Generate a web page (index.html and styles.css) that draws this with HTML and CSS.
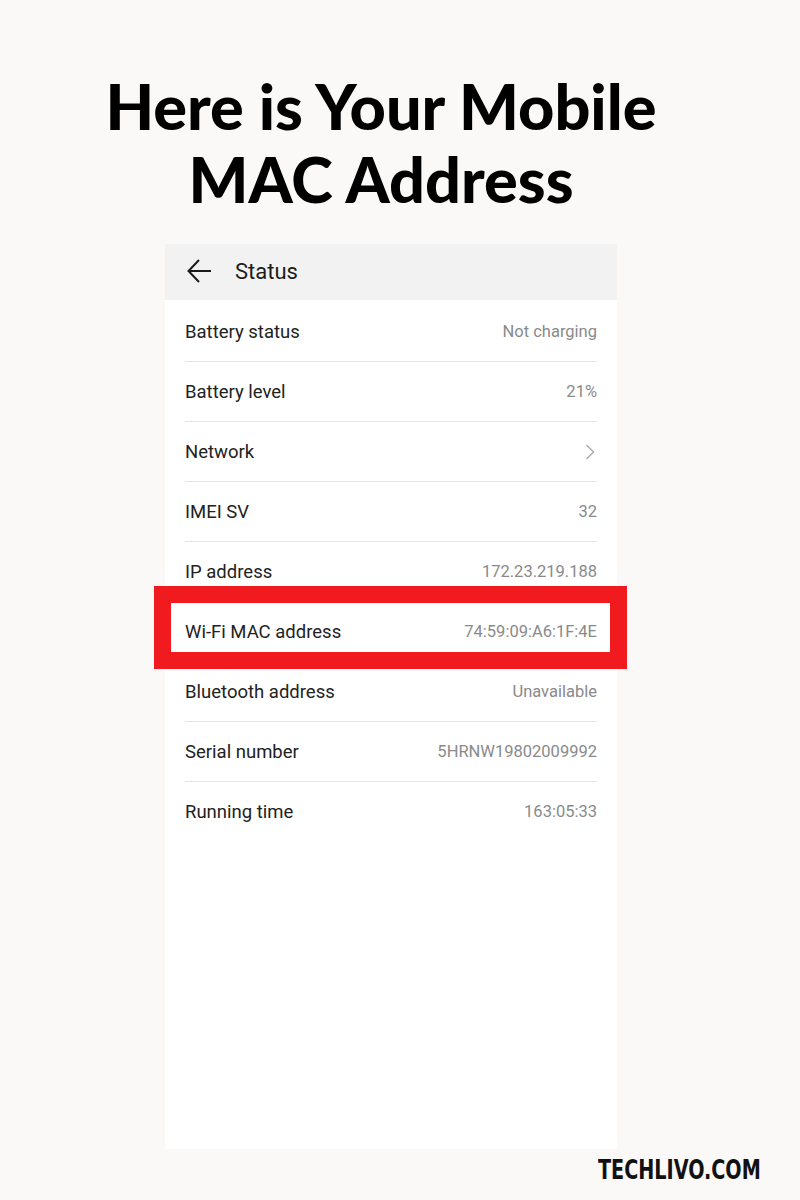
FILE: index.html
```html
<!DOCTYPE html>
<html>
<head>
<meta charset="utf-8">
<link rel="stylesheet" href="styles.css">
</head>
<body>
<div class="page">
  <h1 class="title">Here is Your Mobile<br>MAC Address</h1>
  <div class="phone">
    <div class="appbar">
      <svg class="back" width="24" height="24" viewBox="0 0 24 24"><path d="M12 1 L1.5 12 L12 23 M1.5 12 H24" fill="none" stroke="#1a1a1a" stroke-width="2"/></svg>
      <span class="appbar-title">Status</span>
    </div>
    <ul class="list">
      <li class="row"><span class="label">Battery status</span><span class="value">Not charging</span></li>
      <li class="row"><span class="label">Battery level</span><span class="value">21%</span></li>
      <li class="row"><span class="label">Network</span><svg class="chev" width="10" height="16" viewBox="0 0 10 16"><path d="M1.5 1 L8.5 8 L1.5 15" fill="none" stroke="#a8a8a8" stroke-width="1.4"/></svg></li>
      <li class="row"><span class="label">IMEI SV</span><span class="value">32</span></li>
      <li class="row"><span class="label">IP address</span><span class="value">172.23.219.188</span></li>
      <li class="row"><span class="label">Wi-Fi MAC address</span><span class="value">74:59:09:A6:1F:4E</span></li>
      <li class="row"><span class="label">Bluetooth address</span><span class="value">Unavailable</span></li>
      <li class="row"><span class="label">Serial number</span><span class="value">5HRNW19802009992</span></li>
      <li class="row last"><span class="label">Running time</span><span class="value">163:05:33</span></li>
    </ul>
    <div class="highlight"></div>
  </div>
  <div class="brand">TECHLIVO.COM</div>
</div>
</body>
</html>
```

FILE: styles.css
```css
html, body {
  margin: 0;
  padding: 0;
  background: #faf9f7;
}
.page {
  width: 800px;
  height: 1200px;
  position: relative;
  overflow: hidden;
}
.title {
  margin: 0;
  padding: 69px 38px 0 0;
  text-align: center;
  font-family: "Lato", "Liberation Sans", sans-serif;
  font-weight: 900;
  font-size: 63px;
  line-height: 73px;
  color: #000;
}
.phone {
  position: relative;
  margin: 29px 0 0 165px;
  width: 452px;
  height: 905px;
  background: #ffffff;
}
.appbar {
  height: 56px;
  background: #f2f2f2;
  display: flex;
  align-items: center;
  padding-left: 22px;
  gap: 24px;
}
.back { display: block; margin-top: -2px; }
.appbar-title {
  font-family: "Roboto", "Liberation Sans", sans-serif;
  font-size: 22px;
  color: #1c1c1c;
  margin-top: -2px;
}
.list {
  list-style: none;
  margin: 0;
  padding: 2px 20px 0;
}
.row {
  height: 59px;
  border-bottom: 1px solid #e4e4e4;
  display: flex;
  align-items: center;
  justify-content: space-between;
  font-family: "Roboto", "Liberation Sans", sans-serif;
}
.row.last { border-bottom: none; }
.label {
  font-size: 18.5px;
  color: #222;
}
.value {
  font-size: 16.5px;
  color: #8a8a8a;
}
.chev { display: block; margin-right: 2px; }
.highlight {
  position: absolute;
  left: -11px;
  top: 342px;
  width: 439px;
  height: 49px;
  border: 17px solid #f01a1f;
}
.brand {
  position: absolute;
  left: 598px;
  top: 1155px;
  font-family: "DejaVu Sans Condensed", "DejaVu Sans", sans-serif;
  font-stretch: condensed;
  font-weight: 700;
  font-size: 26px;
  line-height: 30px;
  color: #111;
  transform: scaleX(0.82);
  transform-origin: left center;
}
```
